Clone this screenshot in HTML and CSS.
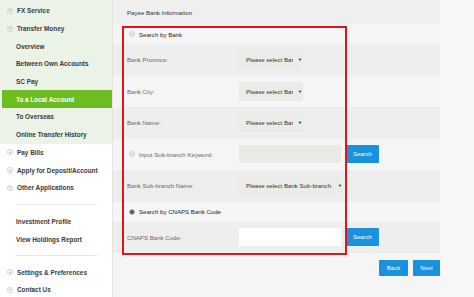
FILE: index.html
```html
<!DOCTYPE html>
<html lang="en">
<head>
    <meta charset="UTF-8">
    <title>Transfer to a Local Account</title>
    <link rel="stylesheet" href="styles.css">
</head>
<body>
<div class="page">

    <aside class="sidebar">
        <div class="open-group">
            <div class="nav-item top"><span class="toggle"></span>FX Service</div>
            <div class="nav-item top"><span class="toggle"></span>Transfer Money</div>
            <div class="nav-item sub">Overview</div>
            <div class="nav-item sub">Between Own Accounts</div>
            <div class="nav-item sub">SC Pay</div>
            <div class="nav-item sub active">To a Local Account</div>
            <div class="nav-item sub">To Overseas</div>
            <div class="nav-item sub">Online Transfer History</div>
        </div>
        <div class="nav-item top"><span class="toggle"></span>Pay Bills</div>
        <div class="nav-item top"><span class="toggle"></span>Apply for Deposit/Account</div>
        <div class="nav-item top"><span class="toggle"></span>Other Applications</div>
        <div class="divider first"></div>
        <div class="nav-item sub">Investment Profile</div>
        <div class="nav-item sub">View Holdings Report</div>
        <div class="divider"></div>
        <div class="nav-item top"><span class="toggle"></span>Settings &amp; Preferences</div>
        <div class="nav-item top"><span class="toggle"></span>Contact Us</div>
    </aside>

    <main class="content">
        <div class="panel">
            <div class="row head">Payee Bank Information</div>

            <div class="row option"><span class="radio"></span>Search by Bank</div>

            <div class="row field">
                <label>Bank Province:</label>
                <div class="select"><span class="select-text">Please select Bank</span><span class="arrow">&#9660;</span></div>
            </div>

            <div class="row field light">
                <label>Bank City:</label>
                <div class="select"><span class="select-text">Please select Bank</span><span class="arrow">&#9660;</span></div>
            </div>

            <div class="row field">
                <label>Bank Name:</label>
                <div class="select"><span class="select-text">Please select Bank</span><span class="arrow">&#9660;</span></div>
            </div>

            <div class="row field light">
                <label class="with-radio"><span class="radio"></span>Input Sub-branch Keyword:</label>
                <div class="text-input grey"></div>
                <button class="btn">Search</button>
            </div>

            <div class="row field">
                <label>Bank Sub-branch Name:</label>
                <div class="select wide"><span class="select-text">Please select Bank Sub-branch</span><span class="arrow">&#9660;</span></div>
            </div>

            <div class="row option"><span class="radio checked"></span>Search by CNAPS Bank Code</div>

            <div class="row field">
                <label>CNAPS Bank Code:</label>
                <div class="text-input"></div>
                <button class="btn">Search</button>
            </div>

            <div class="actions">
                <button class="btn back">Back</button>
                <button class="btn next">Next</button>
            </div>

            <!-- red annotation frame over the search section -->
            <div class="highlight"></div>
        </div>
        <div class="gutter"></div>
    </main>

</div>
</body>
</html>
```

FILE: styles.css
```css
body {
    margin: 0;
    padding: 0;
    font-family: "Liberation Sans", Arial, sans-serif;
    background-color: #f6f6f6;
}

.page {
    display: flex;
    width: 474px;
    height: 297px;
    overflow: hidden;
}

/* sidebar */
.sidebar {
    width: 112px;
    flex-shrink: 0;
    background-color: #ffffff;
    border-right: 1px solid #e4e4e4;
}
.open-group {
    background-color: #ebf3e6;
    padding-top: 2px;
}
.nav-item {
    display: flex;
    align-items: center;
    height: 17.7px;
    padding-left: 16px;
    font-size: 6.4px;
    font-weight: bold;
    color: #3a3a3a;
    white-space: nowrap;
}
.nav-item.top {
    padding-left: 7px;
}
.nav-item.active {
    background-color: #6cbd22;
    color: #ffffff;
    margin-left: 2px;
    padding-left: 14px;
}
.toggle {
    position: relative;
    width: 4px;
    height: 4px;
    border: 1px solid #cfcfcf;
    border-radius: 50%;
    margin-right: 4px;
    box-sizing: content-box;
}
.toggle::after {
    content: "";
    position: absolute;
    left: 1px;
    top: 1.5px;
    width: 2px;
    height: 1px;
    background-color: #bdbdbd;
}
.divider {
    height: 1px;
    background-color: #e6e6e6;
    margin: 7px 15px 7.5px 16px;
}
.divider.first {
    margin-top: 7.5px;
}

/* main */
.content {
    flex: 1;
    display: flex;
}
.panel {
    position: relative;
    width: 327px;
    flex-shrink: 0;
    background-color: #f5f5f5;
}
.gutter {
    flex: 1;
    background-color: #f7f7f7;
}
.row {
    display: flex;
    align-items: center;
    padding-left: 14px;
    font-size: 6.1px;
    color: #6a6a6a;
    background-color: #eeeeee;
}
.row.head {
    height: 24px;
    color: #333333;
    background-color: #efefef;
}
.row.option {
    height: 20px;
    padding-left: 14px;
    color: #1e1e1e;
    background-color: #f5f5f5;
}
.row.field {
    height: 31.5px;
}
.row.light {
    background-color: #f5f5f5;
}
.row label {
    display: flex;
    align-items: center;
    width: 112px;
    flex-shrink: 0;
}
.radio {
    width: 4px;
    height: 4px;
    border: 1px solid #d4d4d4;
    border-radius: 50%;
    background-color: #e6e6e6;
    margin-left: 2px;
    margin-right: 4px;
    flex-shrink: 0;
}
.radio.checked {
    background-color: #555555;
    border-color: #bbbbbb;
}

.select {
    display: flex;
    align-items: center;
    width: 64px;
    height: 19px;
    padding-left: 7px;
    box-sizing: border-box;
    background-color: #ebebe7;
    color: #333333;
}
.select.wide {
    width: 104px;
}
.select-text {
    width: 47px;
    overflow: hidden;
    white-space: nowrap;
}
.select.wide .select-text {
    width: 87px;
}
.arrow {
    font-size: 4px;
    margin-left: 5px;
    color: #111111;
}
.text-input {
    width: 102px;
    height: 18px;
    background-color: #ffffff;
}
.text-input.grey {
    background-color: #e9e9e5;
}

.btn {
    height: 18px;
    padding: 0;
    border: none;
    border-radius: 1px;
    background-color: #1991dc;
    color: #ffffff;
    font-family: "Liberation Sans", Arial, sans-serif;
    font-size: 6px;
    cursor: pointer;
}
.row .btn {
    width: 33px;
    margin-left: 5px;
}
.actions {
    display: flex;
    justify-content: flex-end;
    gap: 5px;
    padding-top: 7px;
}
.actions .btn {
    height: 16px;
}
.btn.back {
    width: 29px;
}
.btn.next {
    width: 27px;
}

.highlight {
    position: absolute;
    left: 9px;
    top: 26px;
    width: 225px;
    height: 229px;
    border: 2px solid #e5121c;
    box-sizing: border-box;
    pointer-events: none;
}
```
